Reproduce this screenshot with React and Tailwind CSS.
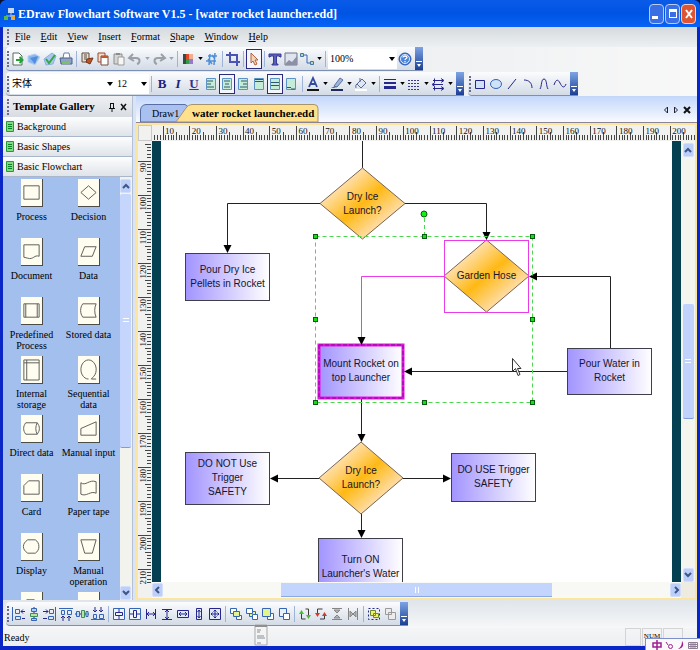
import clsx from "clsx";

const menus = ["File", "Edit", "View", "Insert", "Format", "Shape", "Window", "Help"];

const navy = "#26268c";
const blue = "#3565b5";

// 16x16 drawings used by the toolbars
const icons = {
  newPage: (
    <>
      <path d="M3 2h6l3 3v9H3z" fill="#fff" stroke="#55705c" />
      <path d="M6 9h6M9.5 6l3 3-3 3" stroke="#23a03a" strokeWidth="2" />
    </>
  ),
  open: (
    <>
      <path d="M2 5l7-2 5 3-5 8-7-3z" fill="#8cb6ee" stroke="#b8d2f4" />
      <path d="M4 7l8-2-3 8z" fill="#4f8ede" />
    </>
  ),
  save: (
    <>
      <path d="M2 8l8-6 4 3-3 8-7 1z" fill="#a8c8f0" stroke="#8cb0e4" />
      <path d="M4 8l3 4 6-8" stroke="#36a83c" strokeWidth="2" />
    </>
  ),
  print: (
    <>
      <path d="M5 7l1-5h5l1 5" fill="#fff" stroke="#6a7fa8" />
      <path d="M2 7h12v6H3z" fill="#8fa2c8" stroke="#4d5e8c" />
      <path d="M4 10h8v3H4z" fill="#7ac06a" />
    </>
  ),
  cut: (
    <>
      <path d="M3 2h7v9H3z" fill="#e8e0d8" stroke="#5c4a40" />
      <path d="M5 4h3M5 6h3M5 8h3" stroke="#5c4a40" />
      <path d="M8 8l6-1-3 6-4-2z" fill="#b5562d" stroke="#7a3214" />
    </>
  ),
  copy: (
    <>
      <path d="M3 2h7v9H3z" fill="#f3dcd0" stroke="#9c4a2c" />
      <path d="M6 5h7v9H6z" fill="#fff" stroke="#7a4a3a" />
      <path d="M6 6h7" stroke="#c8562c" strokeWidth="2" />
    </>
  ),
  paste: (
    <>
      <path d="M3 3h8v10H3z" fill="#d6d6d2" stroke="#8c8c8c" />
      <path d="M5 2h4v2H5z" fill="#8c8c8c" />
      <path d="M7 6h6v8H7z" fill="#f6f6f6" stroke="#9a9a9a" />
    </>
  ),
  undo: <path d="M6 3L2 7l5 3M3 7h6c5 0 4 5 1 6" stroke="#9aa0a8" strokeWidth="2" />,
  redo: <path d="M10 3l4 4-5 3M13 7H7c-5 0-4 5-1 6" stroke="#9aa0a8" strokeWidth="2" />,
  palette: (
    <>
      <path d="M3 3h3v10H3z" fill="#3a4a40" />
      <path d="M6 3h3v5H6z" fill="#e04a28" />
      <path d="M9 3h4v5H9z" fill="#f0b090" />
      <path d="M6 8h3v5H6z" fill="#2f9c4a" />
      <path d="M9 8h4v5H9z" fill="#9a78c8" />
    </>
  ),
  tree: <path d="M4 5h9M2 10h10M6 3L5 14M11 2l-1 12M8 4l3 4M4 8l4 5" stroke="#4f8fd8" strokeWidth="1.5" />,
  crop: <path d="M5 1v10h10M1 4h11v11" stroke="#4a54b4" strokeWidth="2" />,
  pointer: <path d="M5 2v10l2-2 2 4 2-1-2-4h3z" fill="#f4d2b8" stroke="#b0623c" />,
  textTool: <path d="M2 3h12v3h-1l-1-1H9.5v8H11v1H5v-1h1.5V5H4L3 6H2z" fill="#5560b8" stroke="#3a3a98" />,
  picture: (
    <>
      <path d="M2 2h12v12H2z" fill="#dfe4ee" stroke="#6e7488" />
      <path d="M2 13l4-4 3 2 5-6v9H2z" fill="#8b90a6" />
    </>
  ),
  connector: (
    <>
      <path d="M4 4h4v8h5" stroke={blue} />
      <path d="M1.500 2.500h3v3h-3zM11.500 10.500h3v3h-3z" fill="#b8d8b0" stroke="#4478a8" />
    </>
  ),
  help: (
    <>
      <circle cx="8" cy="8" r="6" fill="#4a84dc" stroke="#2c58b0" />
      <circle cx="8" cy="8" r="4.5" stroke="#dce8fa" />
      <path d="M6 6.500c0-2 4-2 4 0 0 1-2 1-2 2.500M8 10v1.200" stroke="#fff" strokeWidth="1.3" />
    </>
  ),
  fill: (
    <>
      <path d="M4 8l5-5 4 4-5 5z" fill="#dfe6f2" stroke="#5a6a94" />
      <path d="M4 8c-2 1-1 3-1 4M7 2v4" stroke="#5a6a94" />
      <path d="M2 13h12v2H2z" fill="#fff" />
    </>
  ),
  pen: (
    <>
      <path d="M5 10l6-8 3 2-6 7z" fill="#9fb6dc" stroke="#5872a4" />
      <path d="M2 12l4-2 2 1-3 1z" fill="#5872a4" />
      <path d="M2 13h12v2H2z" fill="#1c2a5c" />
    </>
  ),
  fontColor: (
    <>
      <path d="M4 11l4-9 4 9M5.500 8h5" stroke="#34489c" strokeWidth="1.8" />
      <path d="M2 13h12v2H2z" fill="#151515" />
    </>
  ),
  dash: <path d="M2 4.500h12M2 7.500h12M2 10.500h12M2 13.500h12" stroke="#3a3a88" strokeDasharray="2 1" />,
  arrows: (
    <path
      d="M3 4.500h10M3 8.500h10M3 12.500h10M11 2.500l3 2-3 2M5 6.500l-3 2 3 2M11 10.500l3 2-3 2M4.500 2.500v4M4.500 10.500v4"
      stroke={navy}
    />
  ),
  rect: <path d="M3.500 4.500h9v8h-9z" fill="#cfe2f8" stroke={navy} />,
  ellipse: <ellipse cx="8" cy="8" rx="5.5" ry="4.5" fill="#cfe2f8" stroke={blue} />,
  line: <path d="M4 13l8-10" stroke={navy} />,
  arc: <path d="M4 4c5 0 8 3 8 8" stroke={navy} />,
  curve: <path d="M4 13C6 10 5 3 8 3s2 7 4 10" stroke={navy} />,
  wave: <path d="M2 9c2-6 4-6 6-2s4 6 6 1" stroke={navy} />,
  alignL: (
    <>
      <path d="M2.500 1v14M5.500 3.500h4v4h-4zM5.500 10.500h5v3h-5z" stroke={blue} />
      <path d="M15 5.500h-4M13 3.500l-2 2 2 2M15 12.500h-3" stroke={navy} />
    </>
  ),
  alignC: (
    <>
      <path d="M8 1v14" stroke={navy} />
      <path d="M5.500 2.500h5v3h-5zM5.500 12.500h5v2h-5z" fill="#b8d0f0" stroke={blue} />
      <path d="M4.500 7.500h7v3h-7z" fill="#b5e6a4" stroke="#3c8c60" />
    </>
  ),
  alignR: (
    <>
      <path d="M13.500 1v14M7.500 3.500h4v4h-4zM6.500 10.500h5v3h-5z" stroke={blue} />
      <path d="M1 5.500h5M4 3.500l2 2-2 2M1 12.500h4" stroke={navy} />
    </>
  ),
  alignT: (
    <>
      <path d="M1 2.500h14M3.500 4.500h3v4h-3zM9.500 4.500h4v4h-4z" stroke={blue} />
      <path d="M5 15v-5M3 12l2-2 2 2M11 15v-5M9 12l2-2 2 2" stroke={navy} />
    </>
  ),
  alignM: (
    <>
      <path d="M1 8h14" stroke={navy} />
      <path d="M2.500 5.500h3v5h-3zM12 5.500h2v5h-2z" fill="#c0d6f2" stroke={blue} />
      <path d="M7.500 4.500h3v7h-3z" fill="#b5e6a4" stroke="#3c8c60" />
    </>
  ),
  alignB: (
    <>
      <path d="M1 13.500h14M3.500 8.500h3v4h-3zM9.500 8.500h4v4h-4z" stroke={blue} />
      <path d="M5 1v5M3 4l2 2 2-2M11 1v5M9 4l2 2 2-2" stroke={navy} />
    </>
  ),
  centerV: (
    <>
      <path d="M2.500 2.500h11v11h-11z" fill="#eef4ff" stroke={blue} />
      <path d="M4.500 6.500h7v3h-7zM8 3v3M8 10v3" stroke={navy} />
    </>
  ),
  centerH: (
    <>
      <path d="M2.500 2.500h11v11h-11z" fill="#eef4ff" stroke={blue} />
      <path d="M6.500 4.500h3v7h-3zM3 8h3M10 8h3" stroke={navy} />
    </>
  ),
  spaceH: <path d="M3.500 3v10M12.500 3v10M4 8h8M6 6L4 8l2 2M10 6l2 2-2 2" stroke={navy} />,
  spaceV: <path d="M3 3.500h10M3 13.500h10M8 4v9M6 6l2-2 2 2M6 11l2 2 2-2" stroke={navy} />,
  sameW: <path d="M2.500 4.500h11v7h-11zM4 8h8M6 6L4 8l2 2M10 6l2 2-2 2" fill="#dfeafa" stroke={navy} />,
  sameH: <path d="M5.500 2.500h5v11h-5zM8 4v8M6.500 6L8 4l1.500 2M6.500 10L8 12l1.500-2" fill="#dfeafa" stroke={navy} />,
  sameS: (
    <path
      d="M2.500 2.500h11v11h-11zM4 8h8M8 4v8M5.500 6.500L4 8l1.500 1.500M10.500 6.500L12 8l-1.500 1.500M6.500 5.500L8 4l1.500 1.500M6.500 10.500L8 12l1.500-1.500"
      fill="#dfeafa"
      stroke={navy}
    />
  ),
  front: (
    <>
      <path d="M2.500 2.500h6v5h-6zM8.500 9.500h5v4h-5z" fill="#fff" stroke={blue} />
      <path d="M5.500 5.500h6v5h-6z" fill="#e3f58c" stroke={blue} />
    </>
  ),
  back: (
    <>
      <path d="M5.500 5.500h6v5h-6z" fill="#e3f58c" stroke={blue} />
      <path d="M2.500 2.500h6v5h-6zM8.500 8.500h5v5h-5z" fill="#fff" stroke={blue} />
    </>
  ),
  forward: (
    <>
      <path d="M7.500 7.500h6v6h-6z" fill="#fff" stroke={blue} />
      <path d="M2.500 2.500h8v8h-8z" fill="#e3f58c" stroke={blue} />
    </>
  ),
  backward: (
    <>
      <path d="M3.500 2.500h7v8h-7z" fill="#e8f2ff" stroke={blue} />
      <path d="M7.500 7.500h6v6h-6z" fill="#fff" stroke={blue} />
    </>
  ),
  rotateL: (
    <>
      <path d="M4.500 7v6h4M11.500 9V3h-3" stroke="#3b3b3b" />
      <path d="M2 8l2.500-4L7 8zM9 9h5l-2.500 4z" fill="#4cba38" />
    </>
  ),
  rotateR: (
    <>
      <path d="M4.500 7V3h5M7 13h4.500V8" stroke="#3b3b3b" />
      <path d="M2 7h5l-2.500 4zM9 10l2.500-4L14 10z" fill="#d23a2c" />
    </>
  ),
  flipV: <path d="M3 2.500h10M3 13.500h10M5 4h6L8 7zM5 12h6L8 9z" fill="#b5b5b5" stroke="#858585" />,
  flipH: <path d="M3.500 2v12M12.500 2v12M5 5v6l3-3zM11 5v6L8 8z" fill="#b5b5b5" stroke="#858585" />,
  group: (
    <>
      <path d="M2.500 2.500h11v11h-11z" stroke={navy} strokeDasharray="2 2" />
      <path d="M4.500 4.500h5v5h-5zM7.500 7.500h5v4h-5z" fill="#f2f06c" stroke="#6a8c2c" />
    </>
  ),
  ungroup: <path d="M3.500 2.500h6v6h-6zM6.500 6.500h7v7h-7z" fill="#ececec" stroke="#9a9a9a" />,
};

// text alignment buttons share one page outline
const alignLines = {
  left: "M4 5h6M4 8h4M4 11h7",
  center: "M5 5h6M6 8h4M5 11h6",
  right: "M6 5h6M8 8h4M5 11h7",
  top: "M4 3.500h8M4 5.500h8",
  middle: "M4 6.500h8M4 9.500h8",
  bottom: "M4 11.500h4M8 13h4",
};

function Icon({ name }) {
  return (
    <svg viewBox="0 0 16 16" className="size-4" fill="none" aria-hidden="true">
      {icons[name]}
    </svg>
  );
}

function AlignIcon({ kind }) {
  return (
    <svg viewBox="0 0 16 16" className="size-4" fill="none" aria-hidden="true">
      <path d="M3.500 2.500h9v11h-9z" fill="#c4ecd8" stroke="#5b94c4" />
      <path d={alignLines[kind]} stroke="#2c5a6c" strokeWidth="1.2" />
    </svg>
  );
}

function ToolButton({ label, active, children }) {
  return (
    <button
      aria-label={label}
      className={clsx(
        "flex h-5 w-4 shrink-0 items-center justify-center",
        active && "bg-[#f4f6fc] outline-1 -outline-offset-1 outline-[#2b2b80]"
      )}
    >
      {children}
    </button>
  );
}

function Tool({ name, active }) {
  return (
    <ToolButton label={name} active={active}>
      <Icon name={name} />
    </ToolButton>
  );
}

function Caret({ dim }) {
  return (
    <button aria-label="more" className="flex h-5 w-2 shrink-0 items-center justify-center">
      <svg viewBox="0 0 6 4" className="h-[3px] w-[5px]">
        <path d="M0 0h6L3 4z" fill={dim ? "#8ea4c8" : "#000"} />
      </svg>
    </button>
  );
}

function Sep() {
  return (
    <div className="flex w-[5px] shrink-0 justify-center">
      <div className="h-4 w-px bg-[#9db4d8]" />
    </div>
  );
}

function Grip() {
  return <div className="ml-px h-4 w-0.5 shrink-0 border-l-2 border-dotted border-[#6a6a90]" />;
}

function EndCap() {
  return (
    <button
      aria-label="toolbar options"
      className="ml-0.5 flex w-2 shrink-0 items-end justify-center self-stretch bg-linear-to-b from-[#7fa4e4] to-[#1c3f94] pb-0.5"
    >
      <svg viewBox="0 0 6 7" className="h-[7px] w-1.5">
        <path d="M0 .5h6" stroke="#fff" />
        <path d="M1 3h4L3 6z" fill="#fff" />
      </svg>
    </button>
  );
}

function Toolbar({ children }) {
  return (
    <div className="flex h-6 w-fit items-center rounded-l-sm border-b border-[#7d8fb4] bg-linear-to-b from-[#fbfcfd] to-[#d3dbe6]">
      <Grip />
      <div className="w-px shrink-0" />
      {children}
      <EndCap />
    </div>
  );
}

function Combo({ label, value, className }) {
  return (
    <div className={clsx("relative flex h-5 items-center bg-white", className)}>
      <select aria-label={label} className="h-5 w-full appearance-none pl-0.5 text-[10px] outline-none">
        <option>{value}</option>
      </select>
      <svg viewBox="0 0 6 4" className="pointer-events-none absolute right-0.5 h-1 w-1.5">
        <path d="M0 0h6L3 4z" />
      </svg>
    </div>
  );
}

function TitleBar() {
  return (
    <header className="flex h-[27px] shrink-0 items-center rounded-t-md bg-linear-to-b from-[#0a5be8] via-[#0054e3] to-[#0663f6] pr-1 pl-1">
      <svg viewBox="0 0 12 14" className="mr-0.5 h-3.5 w-3">
        <path d="M4 1h6v5H4z" fill="#c7d8f2" />
        <path d="M7 6v4M2 9h8" stroke="#a8c0e8" />
        <path d="M0 9h4v4H0z" fill="#58b848" />
        <path d="M7 8h4v5H7z" fill="#e4a838" />
      </svg>
      <h1 className="flex-1 truncate text-[12px] font-bold text-white">
        EDraw Flowchart Software V1.5 - [water rocket launcher.edd]
      </h1>
      <div className="flex gap-px">
        <button aria-label="Minimize" className="flex h-5 w-[15px] items-end rounded-sm border border-[#b8ccf4] bg-[#3a6ee4] p-0.5 pb-1">
          <span className="h-[3px] w-1.5 bg-white" />
        </button>
        <button aria-label="Maximize" className="flex h-5 w-[15px] items-center justify-center rounded-sm border border-[#b8ccf4] bg-[#3a6ee4]">
          <span className="h-[9px] w-2 border border-t-3 border-white" />
        </button>
        <button aria-label="Close" className="flex h-5 w-[15px] items-center justify-center rounded-sm border border-[#f4d0c4] bg-[#dd5532]">
          <svg viewBox="0 0 8 10" className="h-2.5 w-2">
            <path d="M1 1l6 8M7 1L1 9" stroke="#fff" strokeWidth="2" />
          </svg>
        </button>
      </div>
    </header>
  );
}

function MenuBar() {
  return (
    <nav className="flex h-5 items-center bg-linear-to-b from-[#d5dade] to-[#edf0f2] pl-[3px]">
      <Grip />
      <div className="flex gap-2.5 pl-1.5">
        {menus.map((menu) => (
          <button key={menu} className="text-[10px] leading-4">
            <span className="underline">{menu[0]}</span>
            {menu.slice(1)}
          </button>
        ))}
      </div>
    </nav>
  );
}

function Toolbars() {
  return (
    <div className="flex h-[49px] shrink-0 flex-col gap-px bg-linear-to-r from-[#dfe4e8] to-[#f8f8f8] pl-[3px]">
      <Toolbar>
        <Tool name="newPage" />
        <Tool name="open" />
        <Tool name="save" />
        <Tool name="print" />
        <Sep />
        <Tool name="cut" />
        <Tool name="copy" />
        <Tool name="paste" />
        <Tool name="undo" />
        <Caret dim />
        <Tool name="redo" />
        <Caret dim />
        <Sep />
        <Tool name="palette" />
        <Caret />
        <Tool name="tree" />
        <Sep />
        <Tool name="crop" />
        <Sep />
        <Tool name="pointer" active />
        <Sep />
        <Tool name="textTool" />
        <Tool name="picture" />
        <Tool name="connector" />
        <Caret />
        <Sep />
        <Combo label="Zoom" value="100%" className="w-[69px]" />
        <Tool name="help" />
      </Toolbar>
      <div className="flex gap-1">
        <Toolbar>
          <Combo label="Font" value="宋体" className="w-[105px]" />
          <Combo label="Size" value="12" className="w-[34px]" />
          <Sep />
          <ToolButton label="Bold">
            <span className="text-[13px] font-bold text-[#20207c]">B</span>
          </ToolButton>
          <ToolButton label="Italic">
            <span className="text-[13px] font-bold text-[#20207c] italic">I</span>
          </ToolButton>
          <ToolButton label="Underline">
            <span className="text-[13px] font-bold text-[#34348c] underline">U</span>
          </ToolButton>
          <div className="flex px-px">
            {Object.keys(alignLines).map((kind) => (
              <ToolButton key={kind} label={kind} active={kind === "center" || kind === "middle"}>
                <AlignIcon kind={kind} />
              </ToolButton>
            ))}
          </div>
          <Sep />
          <Tool name="fontColor" />
          <Caret />
          <Tool name="pen" />
          <Caret />
          <Tool name="fill" />
          <Caret />
          <Sep />
          <ToolButton label="Line weight">
            <svg viewBox="0 0 16 16" className="size-4" aria-hidden="true">
              <path d="M2 3.500h12" stroke={navy} />
              <path d="M2 7h12" stroke={navy} strokeWidth="2" />
              <path d="M2 11.500h12" stroke={navy} strokeWidth="3" />
            </svg>
          </ToolButton>
          <Caret />
          <Tool name="dash" />
          <Caret />
          <Tool name="arrows" />
          <Caret />
        </Toolbar>
        <Toolbar>
          <Tool name="rect" />
          <Tool name="ellipse" />
          <Tool name="line" />
          <Tool name="arc" />
          <Tool name="curve" />
          <Tool name="wave" />
        </Toolbar>
      </div>
    </div>
  );
}

const shapes = [
  { name: "Process", d: "M3 7h16v14H3z" },
  { name: "Decision", d: "M11 7l8 7-8 7-8-7z" },
  { name: "Document", d: "M3 7h16v12c-5-2-6 4-12 2l-4-1z" },
  { name: "Data", d: "M7 9h12l-4 10H3z" },
  { name: "Predefined Process", d: "M3 7h16v14H3zM5 7v14M17 7v14" },
  { name: "Stored data", d: "M5 7h14c-2 4-2 10 0 14H5c-3-4-3-10 0-14z" },
  { name: "Internal storage", d: "M3 4h16v21H3zM3 7h16M6 4v21" },
  { name: "Sequential data", d: "M11 24a8 10 0 1 1 4-1.300L14 24h5" },
  { name: "Direct data", d: "M5 8h12c3 4 3 8 0 12H5c-3-4-3-8 0-12zM17 8c-2 4-2 8 0 12" },
  { name: "Manual input", d: "M3 14l16-7v14H3z" },
  { name: "Card", d: "M8 7h11v14H3v-9z" },
  { name: "Paper tape", d: "M3 9c5 4 9-4 16-1v12c-6-3-10 4-16 1z" },
  { name: "Display", d: "M7 7h8c5 3 5 11 0 14H7c-6-4-6-10 0-14z" },
  { name: "Manual operation", d: "M3 7h16l-4 14H7z" },
];

// the row that is scrolled halfway out of view
const moreShapes = ["M6 8h8c5 4 4 10 0 13H6z", "M3 14l3-3h10l3 3-3 6H6z"];

function ShapeCard({ d }) {
  return (
    <svg
      viewBox="0 0 22 28"
      className="h-7 w-[22px] shrink-0 border-r border-b border-[#4d4d48] bg-[#fffdf0]"
      fill="none"
    >
      <path d={d} stroke="#5b5b58" />
    </svg>
  );
}

function ArrowButton({ d, className }) {
  return (
    <button
      aria-label="scroll"
      className={clsx("flex shrink-0 items-center justify-center rounded-xs border border-[#d2defc] bg-[#bccffb]", className)}
    >
      <svg viewBox="0 0 8 8" className="size-2" fill="none">
        <path d={d} stroke="#3e5684" strokeWidth="2" />
      </svg>
    </button>
  );
}

function Gallery() {
  return (
    <aside className="flex w-[130px] shrink-0 flex-col border-r border-[#b4c0d4] bg-[#eceef2]">
      <div className="flex h-[21px] shrink-0 items-center bg-linear-to-b from-[#eef0f4] to-[#d8dce2] pl-[3px]">
        <Grip />
        <h2 className="flex-1 pl-1 text-[11px] font-bold">Template Gallery</h2>
        <button aria-label="Pin" className="w-2.5">
          <svg viewBox="0 0 8 10" className="h-2.5 w-2" fill="none">
            <path d="M2.500 1v5M5.500 1v5M2 1.500h4M1 6.500h6M4 6v4" stroke="#111" />
          </svg>
        </button>
        <button aria-label="Close gallery" className="mr-1 w-2.5">
          <svg viewBox="0 0 8 8" className="ml-0.5 size-2">
            <path d="M1 1l5 6M6 1L1 7" stroke="#111" strokeWidth="1.5" />
          </svg>
        </button>
      </div>
      {["Background", "Basic Shapes", "Basic Flowchart"].map((section) => (
        <button
          key={section}
          className="flex h-5 shrink-0 items-center gap-[3px] border-b border-[#a9b6cc] bg-linear-to-b from-[#fdfdfd] to-[#dfe4ea] pl-[3px] text-[10px]"
        >
          <svg viewBox="0 0 8 11" className="h-[11px] w-2" fill="none">
            <path d="M.5.5h7v10h-7z" fill="#7fdc7f" stroke="#1f9c34" />
            <path d="M2 3.500h4M2 5.500h4M2 7.500h4" stroke="#12802a" />
          </svg>
          {section}
        </button>
      ))}
      <div className="flex min-h-0 flex-1 overflow-hidden bg-[#a2bfee]">
        <ul className="grid flex-1 auto-rows-[59px] grid-cols-[57px_57px] overflow-hidden pt-0.5">
          {shapes.map((shape) => (
            <li key={shape.name} className="flex flex-col items-center gap-1">
              <ShapeCard d={shape.d} />
              <span className="text-center text-[10px] leading-[11px]">{shape.name}</span>
            </li>
          ))}
          {moreShapes.map((d) => (
            <li key={d} className="flex flex-col items-center">
              <ShapeCard d={d} />
            </li>
          ))}
        </ul>
        <div className="flex w-3 shrink-0 flex-col gap-px bg-[#f3f3ee]">
          <ArrowButton d="M1 6l3-3 3 3" className="mt-0.5 h-3.5 w-[11px]" />
          <div className="flex w-[11px] flex-13 items-center justify-center rounded-xs border-b border-[#7f9cdc] bg-[#c5d5fc]">
            <span className="h-1 w-1.5 border-y border-white" />
          </div>
          <div className="flex-7" />
          <ArrowButton d="M1 2l3 3 3-3" className="h-3.5 w-[11px]" />
        </div>
      </div>
    </aside>
  );
}

function Tabs() {
  return (
    <div className="flex h-[27px] shrink-0 items-end border-b border-[#8c8490] bg-linear-to-b from-[#c3d7fa] to-[#f8faff]">
      <button className="relative ml-1 h-[18px] w-9 text-left text-[10px]">
        <svg viewBox="0 0 50 18" className="absolute top-0 left-0 h-[18px] w-[50px]">
          <path d="M.5 18V6Q1 1 6 .5h39q4 1 2 4L38 18z" fill="#a9c1f0" stroke="#5a6ea4" />
        </svg>
        <span className="relative pl-3">Draw1</span>
      </button>
      <button className="relative h-[18px] w-[143px] text-left text-[11px] font-bold">
        <svg viewBox="0 0 143 18" className="absolute inset-0 h-[18px] w-[143px]">
          <path d="M0 18L10 4Q12 .5 16 .5h122q4 0 4 4V18z" fill="#ffe08c" stroke="#a8946c" />
        </svg>
        <span className="relative pl-4">water rocket launcher.edd</span>
      </button>
      <div className="flex flex-1 items-center justify-end gap-1 pr-1.5 pb-2">
        <button aria-label="Previous tab">
          <svg viewBox="0 0 6 8" className="h-2 w-1.5" fill="none">
            <path d="M4.500 1L1.500 4l3 3z" stroke="#223" />
          </svg>
        </button>
        <button aria-label="Next tab">
          <svg viewBox="0 0 6 8" className="h-2 w-1.5" fill="none">
            <path d="M1.500 1l3 3-3 3z" stroke="#223" />
          </svg>
        </button>
        <button aria-label="Close tab">
          <svg viewBox="0 0 8 8" className="size-2">
            <path d="M1 1l6 6M7 1L1 7" stroke="#111" strokeWidth="2" />
          </svg>
        </button>
      </div>
    </div>
  );
}

function range(count) {
  return Array.from({ length: count }, (_, i) => i);
}

// 26.7px for ten millimetres, the mark for 10 stands 11px from the ruler's start
function TopRuler() {
  return (
    <svg className="h-4 flex-1" shapeRendering="crispEdges">
      {range(205).map((i) => {
        const x = 11 + (i - 3) * 2.67;
        const mark = i - 3;
        const top = mark % 10 === 0 ? 1 : mark % 5 === 0 ? 7 : 10;
        return <path key={i} d={`M${x} ${top}V15`} stroke="#444" />;
      })}
      {range(20).map((i) => (
        <text key={i} x={13 + i * 26.7} y="9" fontSize="9" fill="#111">
          {(i + 1) * 10}
        </text>
      ))}
    </svg>
  );
}

function SideRuler() {
  return (
    <svg className="h-full w-3.5" shapeRendering="crispEdges">
      {range(130).map((i) => {
        const mark = i - 5;
        const y = 20 + mark * 3.4;
        const left = mark % 10 === 0 ? 0 : mark % 5 === 0 ? 7 : 9;
        return <path key={i} d={`M${left} ${y}H13`} stroke="#444" />;
      })}
      {range(13).map((i) => (
        <text
          key={i}
          transform={`translate(8 ${22 + i * 34}) rotate(-90)`}
          textAnchor="end"
          fontSize="9"
          fill="#111"
        >
          {90 + i * 10}
        </text>
      ))}
    </svg>
  );
}

const nodes = [
  { type: "diamond", x: 159, y: 27, w: 85, h: 71, text: ["Dry Ice", "Launch?"] },
  { type: "box", x: 24, y: 112, w: 85, h: 47, text: ["Pour Dry Ice", "Pellets in Rocket"] },
  { type: "diamond", x: 283, y: 99, w: 85, h: 72, text: ["Garden Hose"] },
  { type: "box", x: 157, y: 203, w: 86, h: 54, text: ["Mount Rocket on", "top Launcher"], picked: true },
  { type: "box", x: 406, y: 207, w: 85, h: 46, text: ["Pour Water in", "Rocket"] },
  { type: "diamond", x: 158, y: 301, w: 84, h: 72, text: ["Dry Ice", "Launch?"] },
  { type: "box", x: 24, y: 311, w: 85, h: 52, text: ["DO NOT Use", "Trigger", "SAFETY"] },
  { type: "box", x: 290, y: 312, w: 85, h: 48, text: ["DO USE Trigger", "SAFETY"] },
  { type: "box", x: 157, y: 397, w: 85, h: 57, text: ["Turn ON", "Launcher's Water"] },
];

const links = [
  { d: "M159 62.500H66.500V104", tip: [66.5, 112, 0] },
  { d: "M244 62.500H325.500V91", tip: [325.5, 99, 0] },
  { d: "M449.500 207V135.500H376", tip: [368, 135.5, 90] },
  { d: "M406 230.500H251", tip: [243, 230.5, 90] },
  { d: "M200.500 258V293", tip: [200.5, 301, 0] },
  { d: "M158 337.500H117", tip: [109, 337.5, 90] },
  { d: "M242 337.500H282", tip: [290, 337.5, -90] },
  { d: "M200.500 373V389", tip: [200.5, 397, 0] },
  { d: "M283 135.500H200.500V196", tip: [200.5, 204, 0], color: "#e83ce8" },
];

const handles = [
  [154, 95],
  [263, 95],
  [371, 95],
  [154, 178],
  [371, 178],
  [154, 261],
  [263, 261],
  [371, 261],
];

function NodeShape({ node }) {
  const { x, y, w, h } = node;
  if (node.type === "diamond") {
    return (
      <path
        d={`M${x + w / 2} ${y}L${x + w} ${y + h / 2}L${x + w / 2} ${y + h}L${x} ${y + h / 2}z`}
        fill="url(#gold)"
        stroke="#7a6450"
      />
    );
  }
  if (node.picked) {
    return (
      <>
        <rect x={x + 1} y={y + 1} width={w - 2} height={h - 1} fill="url(#lilac)" stroke="#e412e4" strokeWidth="3" />
        <rect x={x + 1} y={y + 1} width={w - 2} height={h - 1} fill="none" stroke="#7c1080" strokeDasharray="4 2" />
      </>
    );
  }
  return <rect x={x + 0.5} y={y + 0.5} width={w - 1} height={h} fill="url(#lilac)" stroke="#3f3f4c" />;
}

function Canvas() {
  return (
    <div className="relative min-w-0 flex-1 overflow-hidden border-x-9 border-[#053f52] bg-white">
      <svg className="absolute inset-0 size-full" fill="none">
        <defs>
          <linearGradient id="lilac">
            <stop offset="0" stopColor="#a294ff" />
            <stop offset="1" stopColor="#ffffff" />
          </linearGradient>
          <linearGradient id="gold" x1="0" y1="0" x2="1" y2="1">
            <stop offset=".2" stopColor="#ffe6c4" />
            <stop offset=".5" stopColor="#ffb914" />
            <stop offset=".8" stopColor="#ffe3c0" />
          </linearGradient>
        </defs>
        <path d="M201.500 0V27" stroke="#222" />
        {links.map((link) => (
          <path key={link.d} d={link.d} stroke={link.color || "#222"} />
        ))}
        {nodes.map((node) => (
          <NodeShape key={`${node.x}-${node.y}`} node={node} />
        ))}
        <rect x="283.5" y="99.5" width="84" height="72" stroke="#e83ce8" />
        {links.map((link) => (
          <path
            key={link.d}
            d="M0 0l-4-8h8z"
            fill="#000"
            transform={`translate(${link.tip[0]} ${link.tip[1]}) rotate(${link.tip[2]})`}
          />
        ))}
        <path d="M154.500 95.500h217v166h-217zM263.500 95V73" stroke="#4cd84c" strokeDasharray="4 3" />
        {handles.map(([x, y]) => (
          <rect key={`${x}-${y}`} x={x - 1.5} y={y - 1.5} width="4" height="4" fill="#12e012" stroke="#0a5a14" />
        ))}
        <circle cx="263" cy="73" r="3" fill="#12f012" stroke="#0a5a14" />
        <path d="M351.500 217.500v13l3-3 2.500 7 2-1-2.500-6h3.500z" fill="#fff" stroke="#333" />
      </svg>
      {nodes.map((node) => (
        <div
          key={`${node.x}-${node.y}`}
          className="absolute flex flex-col items-center justify-center font-['Liberation_Sans',sans-serif] text-[10px] leading-[14px] whitespace-nowrap text-[#15152c]"
          style={{ left: node.x, top: node.y, width: node.w, height: node.h }}
        >
          {node.text.map((line) => (
            <span key={line}>{line}</span>
          ))}
        </div>
      ))}
    </div>
  );
}

function Editor() {
  return (
    <main className="flex min-w-0 flex-1 flex-col">
      <Tabs />
      <div className="flex min-h-0 flex-1 flex-col border-2 border-[#fbe6a0] bg-[#f1f1ef]">
        <div className="flex h-4 shrink-0">
          <div className="w-3.5 shrink-0 border border-[#c8c8c8]" />
          <TopRuler />
        </div>
        <div className="flex min-h-0 flex-1">
          <div className="w-3.5 shrink-0 overflow-hidden">
            <SideRuler />
          </div>
          <div className="flex min-w-0 flex-1 flex-col">
            <div className="flex min-h-0 flex-1">
              <Canvas />
              <div className="flex w-3.5 shrink-0 flex-col items-center bg-[#f5f5f0]">
                <ArrowButton d="M1 6l3-3 3 3" className="mt-0.5 h-3.5 w-[11px]" />
                <div className="flex-147" />
                <div className="flex w-[11px] flex-114 items-center justify-center rounded-xs border-b border-[#7f9cdc] bg-[#c1d2fc]">
                  <span className="h-1 w-1.5 border-y border-white" />
                </div>
                <div className="flex-149" />
                <ArrowButton d="M1 2l3 3 3-3" className="h-3.5 w-[11px]" />
              </div>
            </div>
            <div className="flex h-4 shrink-0 items-center bg-[#f8f8f4]">
              <ArrowButton d="M5 1L2 4l3 3" className="h-3.5 w-[11px]" />
              <div className="flex-118" />
              <div className="flex h-3.5 flex-272 items-center justify-center border-b border-[#8aa8e4] bg-[#c3d5fc]">
                <span className="h-1.5 w-1 border-x border-white" />
              </div>
              <div className="flex-118" />
              <ArrowButton d="M3 1l3 3-3 3" className="h-3.5 w-[11px]" />
              <div className="w-3.5 shrink-0 self-stretch bg-[#eeebe0]" />
            </div>
          </div>
        </div>
      </div>
    </main>
  );
}

function BottomBar() {
  return (
    <div className="shrink-0 bg-linear-to-b from-[#dfe5ea] to-[#f6f7f8] py-0.5 pl-[3px]">
      <Toolbar>
        {["alignL", "alignC", "alignR", "alignT", "alignM", "alignB"].map((name) => (
          <Tool key={name} name={name} />
        ))}
        <Sep />
        {["centerV", "centerH", "spaceH", "spaceV", "sameW", "sameH", "sameS"].map((name) => (
          <Tool key={name} name={name} />
        ))}
        <Sep />
        {["front", "back", "forward", "backward"].map((name) => (
          <Tool key={name} name={name} />
        ))}
        <Sep />
        {["rotateL", "rotateR", "flipV", "flipH"].map((name) => (
          <Tool key={name} name={name} />
        ))}
        <Sep />
        <Tool name="group" />
        <Tool name="ungroup" />
      </Toolbar>
    </div>
  );
}

function StatusBar() {
  return (
    <footer className="relative flex h-[18px] shrink-0 items-center justify-between bg-linear-to-b from-[#f4f5f7] to-[#eceef1] text-[10px]">
      <span className="pl-px">Ready</span>
      <svg viewBox="0 0 14 22" className="absolute -top-1 left-[251px] h-[22px] w-3.5" fill="none">
        <path d="M1 1h12v20H1z" fill="#f4f4f4" stroke="#a9a9a9" />
        <path d="M1 1h12v2H1z" fill="#8f8f8f" />
        <path d="M3 6h4M3 8h3M3 12h7M3 14h8M3 19h4" stroke="#8a8f98" />
      </svg>
      <div className="mr-3.5 flex h-full gap-px text-[7px] leading-[14px]">
        <span className="w-4 border border-[#d4d4d4]" />
        <span className="w-5 border border-[#d4d4d4] text-center">NUM</span>
        <span className="w-5 border border-[#d4d4d4]" />
      </div>
    </footer>
  );
}

function LanguageBar() {
  return (
    <div className="absolute right-0 bottom-0 flex h-3 w-[55px] items-center justify-between border-t border-l border-[#7c8fc8] bg-[#fbf8fc] pr-0.5 pl-1.5">
      <svg viewBox="0 0 10 10" className="size-2.5" fill="none">
        <path d="M1 3h8v4H1zM5 0v10" stroke="#a01c90" strokeWidth="1.5" />
      </svg>
      <svg viewBox="0 0 8 8" className="size-2" fill="none">
        <path d="M1 1l2 3" stroke="#a01c90" />
        <circle cx="5.5" cy="5.5" r="2" stroke="#a01c90" />
      </svg>
      <svg viewBox="0 0 8 8" className="size-2">
        <path d="M5 0c3 4 0 8-4 8 3-2 4-4 4-8z" fill="#a01c90" />
      </svg>
      <svg viewBox="0 0 10 8" className="h-2 w-2.5" fill="none">
        <path d="M.5 1.500h9v6h-9zM1 3.500h8M1 5.500h8M3 2v5M5 2v5M7 2v5" stroke="#8c7c94" />
      </svg>
    </div>
  );
}

export default function App() {
  return (
    <div className="h-screen bg-[#0a1030] font-['Liberation_Serif','Noto_Sans_CJK_SC',serif] text-black">
      <div className="relative flex h-full flex-col overflow-hidden rounded-t-md bg-[#0831d9]">
        <TitleBar />
        <div className="flex min-h-0 flex-1 flex-col border-x-3 border-b-4 border-[#0a26c4]">
          <MenuBar />
          <Toolbars />
          <div className="flex min-h-0 flex-1">
            <Gallery />
            <div className="w-[3px] shrink-0 bg-[#dbe4f4]" />
            <Editor />
          </div>
          <BottomBar />
          <StatusBar />
        </div>
        <LanguageBar />
      </div>
    </div>
  );
}
